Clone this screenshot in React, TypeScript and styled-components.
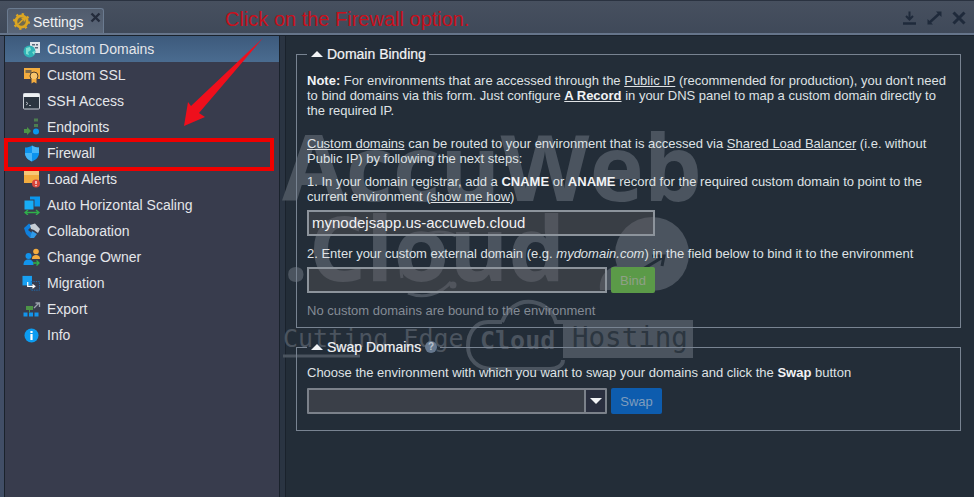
import styled, { createGlobalStyle } from 'styled-components'
import { ReactNode } from 'react'

const GlobalStyle = createGlobalStyle`
  html, body {
    margin: 0;
    padding: 0;
    background: #232d38;
  }
`

const Page = styled.div`
  width: 974px;
  height: 497px;
  overflow: hidden;
  position: relative;
  display: flex;
  flex-direction: column;
  font-family: 'Liberation Sans', Arial, sans-serif;
  font-size: 13px;
  color: #e6e8ea;
  background: #232d38;
`

const TopBar = styled.div`
  height: 35px;
  flex: none;
  box-sizing: border-box;
  border-top: 1px solid #2a3240;
  border-bottom: 2px solid #66758b;
  background: linear-gradient(#47505f, #3f4959);
  display: flex;
  align-items: flex-end;
  justify-content: space-between;
  padding: 0 7px 0 7px;
`

const Tab = styled.div`
  width: 97px;
  height: 25px;
  box-sizing: border-box;
  position: relative;
  border: 1px solid #6b7b90;
  border-bottom: none;
  border-radius: 3px 3px 0 0;
  background: linear-gradient(#515c6d, #5a6678);
  display: flex;
  align-items: center;
  gap: 3px;
  padding: 1px 0 0 5px;
  font-size: 14px;
  color: #f0f2f4;
`

const TabClose = styled.svg`
  position: absolute;
  top: 3px;
  right: 2px;
`

const WindowTools = styled.div`
  display: flex;
  align-items: center;
  gap: 10px;
  height: 30px;
  margin-right: 1px;
`

const Body = styled.div`
  flex: 1;
  display: flex;
  min-height: 0;
  padding-left: 4px;
  border-top: 1px solid #1a222c;
  background: #414e66;
`

const Sidebar = styled.nav`
  width: 276px;
  flex: none;
  box-sizing: border-box;
  background: #383c4d;
  border-left: 1px solid #1a222c;
  border-right: 1px solid #1a222c;
  position: relative;
`

const MenuRow = styled.div<{ $active?: boolean }>`
  height: 26px;
  display: flex;
  align-items: center;
  gap: 6px;
  padding-left: 17px;
  font-size: 14px;
  color: #e4e6ea;
  background: ${(p) =>
    p.$active ? 'linear-gradient(#3d5a7c, #4a6c90)' : 'transparent'};
`

const IconSlot = styled.span`
  width: 19px;
  height: 18px;
  flex: none;
  display: flex;
  align-items: center;
  justify-content: center;
`

const Highlight = styled.div`
  position: absolute;
  left: -1px;
  top: 102px;
  width: 270px;
  height: 33px;
  border: 4px solid #f00000;
  box-sizing: border-box;
`

const Divider = styled.div`
  width: 6px;
  flex: none;
  box-sizing: border-box;
  background: #2a3442;
  border-right: 1px solid #1a222c;
`

const Content = styled.main`
  flex: 1;
  min-width: 0;
  box-sizing: border-box;
  padding: 10px 13px 0 10px;
  display: flex;
  flex-direction: column;
  gap: 11px;
  background: #232d38;
`

const Fieldset = styled.fieldset`
  margin: 0;
  padding: 10px 10px 0;
  border: 1px solid #788391;
  min-width: 0;
  position: relative;
  z-index: 1;
`

const Legend = styled.legend`
  padding: 0 3px 0 4px;
  display: flex;
  align-items: center;
  gap: 4px;
  font-size: 14px;
  line-height: 16px;
  color: #f2f3f5;
  -webkit-text-stroke: 0.2px #f2f3f5;
`

const Caret = styled.span`
  width: 0;
  height: 0;
  border-left: 6px solid transparent;
  border-right: 6px solid transparent;
  border-bottom: 6px solid #f2f3f5;
`

const Para = styled.p<{ $gap?: number; $dim?: boolean }>`
  margin: ${(p) => p.$gap ?? 0}px 0 0;
  font-size: 13px;
  line-height: 15px;
  color: ${(p) => (p.$dim ? '#838b95' : '#dfe2e5')};
  b { color: #f2f3f5; }
  u { text-underline-offset: 1px; }
`

const InputRow = styled.div<{ $gap?: number; $bottom?: number }>`
  display: flex;
  gap: 4px;
  margin: ${(p) => p.$gap ?? 0}px 0 ${(p) => p.$bottom ?? 0}px;
`

const TextField = styled.div<{ $width: number }>`
  width: ${(p) => p.$width}px;
  height: 26px;
  box-sizing: border-box;
  border: 2px solid #8d949c;
  background: rgba(90, 88, 90, 0.4);
  color: #f0f1f3;
  font-size: 15px;
  line-height: 22px;
  padding-left: 3px;
`

const Combo = styled.div`
  width: 300px;
  height: 26px;
  box-sizing: border-box;
  border: 2px solid #7b818a;
  border-radius: 1px;
  background: #3a3f48;
  display: flex;
  justify-content: flex-end;
`

const ComboArrow = styled.div`
  width: 19px;
  border-left: 2px solid #7b818a;
  background: #2a2f3f;
  display: flex;
  align-items: center;
  justify-content: center;
  &::after {
    content: '';
    border-left: 6px solid transparent;
    border-right: 6px solid transparent;
    border-top: 6px solid #f2f3f5;
  }
`

const Button = styled.div<{ $tone: 'green' | 'blue'; $width: number }>`
  width: ${(p) => p.$width}px;
  height: 26px;
  border-radius: 2px;
  background: ${(p) => (p.$tone === 'green' ? '#5b9a48' : '#0d5cae')};
  color: ${(p) => (p.$tone === 'green' ? '#8fa087' : '#7f9cbd')};
  font-size: 13px;
  display: flex;
  align-items: center;
  justify-content: center;
`

const HelpDot = styled.span`
  width: 12px;
  height: 12px;
  border-radius: 50%;
  background: #66788e;
  color: #b9c2cc;
  font-size: 10px;
  font-weight: bold;
  line-height: 12px;
  text-align: center;
  -webkit-text-stroke: 0;
`

const Watermark = styled.div`
  position: absolute;
  left: 280px;
  top: 110px;
  width: 430px;
  height: 262px;
  pointer-events: none;
  z-index: 0;
  color: #4b545f;
`

const BrandLine = styled.div<{ $left: number; $top: number; $size: number; $spacing?: number }>`
  position: absolute;
  left: ${(p) => p.$left}px;
  top: ${(p) => p.$top}px;
  font-family: 'Open Sans', 'Liberation Sans', sans-serif;
  font-size: ${(p) => p.$size}px;
  letter-spacing: ${(p) => p.$spacing ?? 0}px;
  line-height: 1;
  font-weight: bold;
  white-space: nowrap;
`

const MonoLine = styled.div<{ $left: number; $top: number; $size: number; $bold?: boolean; $dark?: boolean }>`
  position: absolute;
  left: ${(p) => p.$left}px;
  top: ${(p) => p.$top}px;
  font-family: 'DejaVu Sans Mono', monospace;
  font-size: ${(p) => p.$size}px;
  font-weight: ${(p) => (p.$bold ? 'bold' : 'normal')};
  color: ${(p) => (p.$dark ? '#2c3640' : '#4b545f')};
  line-height: 1;
  white-space: nowrap;
`

const HostingBand = styled.div`
  position: absolute;
  left: 283px;
  top: 210px;
  width: 130px;
  height: 38px;
  background: #4b545f;
`

const MarkArt = styled.svg`
  position: absolute;
  left: 0;
  top: 0;
`

const Callout = styled.div`
  position: absolute;
  left: 225px;
  top: 9px;
  color: #c8101c;
  font-size: 20px;
  line-height: 21px;
  z-index: 3;
`

const ArrowLayer = styled.svg`
  position: absolute;
  left: 170px;
  top: 30px;
  z-index: 3;
`

const icons: Record<string, ReactNode> = {
  domains: (
    <svg width="18" height="17" viewBox="0 0 18 17">
      <path d="M7 1 H17 V12 H7Z" fill="#dfe4ea" />
      <path d="M9 3h3v1.500H9z M13 3h2v1.500h-2z M12 6h3v1.500h-3z" fill="#5a6678" />
      <circle cx="6.500" cy="10.500" r="6" fill="#2fb2b6" />
      <path d="M3 7 L7 6 L8 9 L5 11 L6 14 L3 13Z M9 11 L12 10 L11 14Z" fill="#7fe0d2" />
    </svg>
  ),
  ssl: (
    <svg width="18" height="17" viewBox="0 0 18 17">
      <rect x="1" y="1" width="16" height="11" fill="#f3ac3f" />
      <rect x="2.500" y="3" width="6" height="3" fill="#7d6a4a" />
      <circle cx="11" cy="9" r="4" fill="#f7c46c" stroke="#4b3b2a" />
      <path d="M8.500 12 V16.500 L11 15 L13.500 16.500 V12Z" fill="#f3ac3f" />
    </svg>
  ),
  ssh: (
    <svg width="17" height="17" viewBox="0 0 17 17">
      <rect x="0.500" y="0.500" width="16" height="15.500" rx="1" fill="#2b3440" stroke="#c9ced6" />
      <rect x="0.500" y="0.500" width="16" height="3.500" fill="#eef0f3" />
      <path d="M3 9 L5 10.500 L3 12 M6 12.500 H8" fill="none" stroke="#c9ced6" strokeWidth="0.8" />
    </svg>
  ),
  endpoints: (
    <svg width="18" height="18" viewBox="0 0 18 18">
      <path d="M1 11 H4 V9 L8 13 L4 17 V15 H1Z" fill="#4d9447" />
      <rect x="11" y="0.500" width="4" height="3" fill="#4d7d50" />
      <rect x="11" y="6" width="4" height="3" fill="#4d7d50" />
      <circle cx="13" cy="13.500" r="3" fill="#0a97ee" />
    </svg>
  ),
  firewall: (
    <svg width="16" height="17" viewBox="0 0 16 17">
      <path d="M8 0.500 C10 2 12.500 2.500 15 2.500 V8 C15 12 12 15 8 16.500 C4 15 1 12 1 8 V2.500 C3.500 2.500 6 2 8 0.500Z" fill="#0c93ee" />
      <path d="M8 0.500 C10 2 12.500 2.500 15 2.500 V8 H8Z M8 8 H1 C1 12 4 15 8 16.500Z" fill="#47b6f7" />
    </svg>
  ),
  alerts: (
    <svg width="18" height="19" viewBox="0 0 18 19">
      <rect x="1" y="0" width="15" height="13" fill="#f3ac3f" />
      <rect x="1" y="0" width="15" height="5" fill="#f8c877" />
      <circle cx="13" cy="13.500" r="4" fill="#d8473c" />
      <path d="M12.400 11h1.200v3h-1.200z M12.400 15h1.200v1.200h-1.200z" fill="#fff" />
    </svg>
  ),
  scaling: (
    <svg width="18" height="19" viewBox="0 0 18 19">
      <rect x="7" y="0.500" width="10" height="10" fill="#0a97ee" />
      <rect x="1" y="4" width="10" height="10" fill="#18adf5" stroke="#383c4d" />
      <path d="M2 16.500 H16 M5 14 L2 16.500 L5 19 M13 14 L16 16.500 L13 19" fill="none" stroke="#2fb04a" strokeWidth="1.300" />
    </svg>
  ),
  collaboration: (
    <svg width="18" height="16" viewBox="0 0 18 16">
      <path d="M1 5 L6 0.500 L9 3 L5 7 L9 10 L7 15 L3 11Z" fill="#0f7fdc" />
      <path d="M7 2 L12 0.500 L17 6 L15 10 L11 7 L8 6Z" fill="#c6ccd4" />
      <path d="M9 8 L14 11 L11 15 L7 15Z" fill="#2f9ae8" />
    </svg>
  ),
  owner: (
    <svg width="18" height="18" viewBox="0 0 18 18">
      <circle cx="5.500" cy="8" r="3" fill="#1294ec" />
      <path d="M0.500 17 C0.500 13 2.500 11.500 5.500 11.500 C8.500 11.500 10.500 13 10.500 17Z" fill="#1294ec" />
      <circle cx="13" cy="3.500" r="2.800" fill="#f3ac3f" />
      <path d="M9 11 C9 8 10.500 7 13 7 C15.500 7 17 8 17 11Z" fill="#f3ac3f" />
      <path d="M10 15 H16 M13.500 12.500 L16 15 L13.500 17.500" fill="none" stroke="#2fb04a" strokeWidth="1.300" />
    </svg>
  ),
  migration: (
    <svg width="20" height="17" viewBox="0 0 20 17">
      <rect x="0.500" y="0.500" width="10" height="10" fill="#18a0f2" />
      <rect x="9.500" y="6.500" width="9" height="9" fill="none" stroke="#1c6fb4" strokeDasharray="1.500 1" />
      <path d="M6 7 V11.500 H13 M11 9.500 L13.500 11.500 L11 13.500" fill="none" stroke="#fff" strokeWidth="1.300" />
    </svg>
  ),
  export: (
    <svg width="18" height="15" viewBox="0 0 18 15">
      <rect x="3" y="4" width="7" height="4" fill="#4d9447" />
      <path d="M11 6 L16 1 M12.500 1 H16.500 V5" fill="none" stroke="#9aa2ac" strokeWidth="1.300" />
      <rect x="0.500" y="10.500" width="4" height="4" fill="#1294ec" />
      <rect x="6" y="10.500" width="4" height="4" fill="#1294ec" />
      <rect x="11.500" y="10.500" width="4" height="4" fill="#1294ec" />
      <path d="M6.500 8 V10.500" stroke="#4d9447" />
    </svg>
  ),
  info: (
    <svg width="15" height="15" viewBox="0 0 15 15">
      <circle cx="7.500" cy="7.500" r="7" fill="#0c9cf0" />
      <rect x="6.400" y="3" width="2.200" height="2" fill="#fff" />
      <rect x="6.400" y="6" width="2.200" height="6" fill="#fff" />
    </svg>
  ),
}

const menu = [
  { key: 'domains', label: 'Custom Domains' },
  { key: 'ssl', label: 'Custom SSL' },
  { key: 'ssh', label: 'SSH Access' },
  { key: 'endpoints', label: 'Endpoints' },
  { key: 'firewall', label: 'Firewall' },
  { key: 'alerts', label: 'Load Alerts' },
  { key: 'scaling', label: 'Auto Horizontal Scaling' },
  { key: 'collaboration', label: 'Collaboration' },
  { key: 'owner', label: 'Change Owner' },
  { key: 'migration', label: 'Migration' },
  { key: 'export', label: 'Export' },
  { key: 'info', label: 'Info' },
]

export default function App() {
  return (
    <Page>
      <GlobalStyle />
      <TopBar>
        <Tab>
          <svg width="17" height="17" viewBox="0 0 18 18">
            <circle cx="9" cy="9" r="6" fill="#6f6a4e" stroke="#dca622" strokeWidth="3" />
            <circle cx="9" cy="9" r="8" fill="none" stroke="#dca622" strokeWidth="2" strokeDasharray="2.500 3.780" />
            <path d="M5.500 12 L12 5.500 M9 5.500 H12 V9" fill="none" stroke="#dca622" strokeWidth="1.500" />
          </svg>
          Settings
          <TabClose width="11" height="11" viewBox="0 0 11 11">
            <path d="M1.500 1.500 L9.500 9.500 M9.500 1.500 L1.500 9.500" stroke="#242c3c" strokeWidth="2.400" />
          </TabClose>
        </Tab>
        <WindowTools>
          <svg width="15" height="14" viewBox="0 0 15 14">
            <path d="M7.500 0.500 V8 M4 5 L7.500 8.500 L11 5" fill="none" stroke="#1f2a3b" strokeWidth="2" />
            <path d="M1 12.500 H14" stroke="#1f2a3b" strokeWidth="2.500" />
          </svg>
          <svg width="15" height="14" viewBox="0 0 15 14">
            <path d="M2 12 L13 2" stroke="#1f2a3b" strokeWidth="2.500" />
            <path d="M9 0.500 H14.500 V6Z M0.500 8 V13.500 H6Z" fill="#1f2a3b" />
          </svg>
          <svg width="14" height="14" viewBox="0 0 14 14">
            <path d="M1.500 1.500 L12.500 12.500 M12.500 1.500 L1.500 12.500" stroke="#1f2a3b" strokeWidth="3" />
          </svg>
        </WindowTools>
      </TopBar>
      <Body>
        <Sidebar>
          {menu.map((item, i) => (
            <MenuRow key={item.key} $active={i === 0}>
              <IconSlot>{icons[item.key]}</IconSlot>
              {item.label}
            </MenuRow>
          ))}
          <Highlight />
        </Sidebar>
        <Divider />
        <Content>
          <Fieldset>
            <Legend><Caret />Domain Binding</Legend>
            <Para $gap={1}>
              <b>Note:</b> For environments that are accessed through the <u>Public IP</u> (recommended for production), you don't need to bind domains via this form. Just configure <u><b>A Record</b></u> in your DNS panel to map a custom domain directly to the required IP.
            </Para>
            <Para $gap={18}>
              <u>Custom domains</u> can be routed to your environment that is accessed via <u>Shared Load Balancer</u> (i.e. without Public IP) by following the next steps:
            </Para>
            <Para $gap={8}>
              1. In your domain registrar, add a <b>CNAME</b> or <b>ANAME</b> record for the required custom domain to point to the current environment (<u>show me how</u>)
            </Para>
            <InputRow $gap={6}>
              <TextField $width={348}>mynodejsapp.us-accuweb.cloud</TextField>
            </InputRow>
            <Para $gap={10}>
              2. Enter your custom external domain (e.g. <i>mydomain.com</i>) in the field below to bind it to the environment
            </Para>
            <InputRow $gap={6}>
              <TextField $width={300} />
              <Button $tone="green" $width={44}>Bind</Button>
            </InputRow>
            <Para $gap={10} $dim>No custom domains are bound to the environment</Para>
            <InputRow $bottom={9} />
          </Fieldset>
          <Fieldset>
            <Legend><Caret />Swap Domains<HelpDot>?</HelpDot></Legend>
            <Para>
              Choose the environment with which you want to swap your domains and click the <b>Swap</b> button
            </Para>
            <InputRow $gap={8} $bottom={16}>
              <Combo><ComboArrow /></Combo>
              <Button $tone="blue" $width={51}>Swap</Button>
            </InputRow>
          </Fieldset>
        </Content>
      </Body>
      <Watermark>
        <MarkArt width="430" height="262" viewBox="0 0 430 262">
          <circle cx="372" cy="144" r="37" fill="#4b545f" />
          <path d="M320 180 C318 164 332 152 346 156 L372 180Z" fill="#4b545f" />
          <path d="M333 177 L383 147 M372 146 L384 146 L382 156" fill="none" stroke="#232d38" strokeWidth="3" />
          <path d="M122 168 A38 38 0 0 1 176 126 M171 172 A38 38 0 0 1 128 183" fill="none" stroke="#4b545f" strokeWidth="3" />
          <circle cx="173" cy="175" r="3.500" fill="#4b545f" />
          <path d="M222 212 H208 C196 212 188 222 188 236 C188 250 198 259 212 259 H270 C276 259 283 256 283 250 M283 212 H276 C272 198 258 190 244 192 C234 194 226 202 222 212" fill="none" stroke="#4b545f" strokeWidth="4" />
          <path d="M3 246 H80" stroke="#4b545f" strokeWidth="3" />
        </MarkArt>
        <BrandLine $left={2} $top={10} $size={92} $spacing={0}>AccuWeb</BrandLine>
        <BrandLine $left={3} $top={91} $size={90}>.Cloud</BrandLine>
        <MonoLine $left={3} $top={216} $size={25}>Cutting Edge</MonoLine>
        <HostingBand />
        <MonoLine $left={200} $top={218} $size={25} $bold>Cloud</MonoLine>
        <MonoLine $left={292} $top={214} $size={27.500} $dark>Hosting</MonoLine>
      </Watermark>
      <Callout>Click on the Firewall option.</Callout>
      <ArrowLayer width="110" height="105" viewBox="0 0 110 105">
        <path d="M93 8 L29 83 L35 87 L14 96 L18 72 L21 76 Z" fill="#ef0f1c" />
      </ArrowLayer>
    </Page>
  )
}
